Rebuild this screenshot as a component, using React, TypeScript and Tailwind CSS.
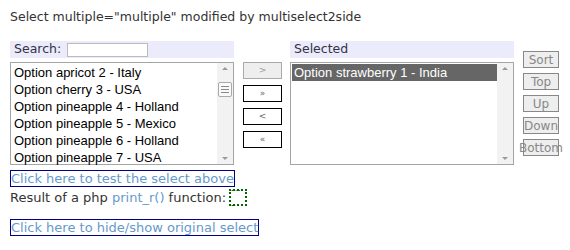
import React from "react";

const LEFT = [
  "Option apricot 2 - Italy",
  "Option cherry 3 - USA",
  "Option pineapple 4 - Holland",
  "Option pineapple 5 - Mexico",
  "Option pineapple 6 - Holland",
  "Option pineapple 7 - USA",
];

const MOVE = [">", "»", "<", "«"];
const ORDER = ["Sort", "Top", "Up", "Down", "Bottom"];

function Scrollbar({ thumb }: { thumb: boolean }) {
  return (
    <div className="flex w-[16px] flex-col items-center justify-between bg-[#f2f2f2] py-[4px]">
      <span className="h-0 w-0 border-x-[3px] border-b-[3px] border-x-transparent border-b-[#999]" />
      {thumb && (
        <div className="absolute top-[19px] flex h-[15px] w-[14px] flex-col items-center justify-center gap-[2px] rounded-[2px] border border-[#aaa] bg-[#fafafa]">
          <span className="h-px w-[8px] bg-[#888]" />
          <span className="h-px w-[8px] bg-[#888]" />
          <span className="h-px w-[8px] bg-[#888]" />
        </div>
      )}
      <span className="h-0 w-0 border-x-[3px] border-t-[3px] border-x-transparent border-t-[#999]" />
    </div>
  );
}

export default function App() {
  return (
    <div className="px-[10px] pt-[9px] font-['DejaVu_Sans',sans-serif] text-[12px] text-[#333]">
      <p className="text-[12.5px] leading-[15px]">Select multiple="multiple" modified by multiselect2side</p>

      <div className="mt-[17px] flex items-start">
        <div className="w-[224px]">
          <div className="flex h-[17px] items-center gap-[6px] bg-[#ebebfb] pl-[4px] text-[12.5px] text-[#334]">
            <span>Search:</span>
            <input className="h-[14px] w-[81px] border border-[#bbb] bg-white" />
          </div>
          <div className="relative mt-[4px] flex h-[103px] border border-[#a5a5a5] bg-white font-['Liberation_Sans',Arial,sans-serif] text-[13px] text-black">
            <div className="flex-1 pt-[1px] pl-[3px]">
              {LEFT.map((o) => (
                <div key={o} className="h-[17px] whitespace-nowrap leading-[17px]">{o}</div>
              ))}
            </div>
            <Scrollbar thumb />
          </div>
        </div>

        <div className="ml-[9px] flex w-[39px] flex-col gap-[6px] pt-[21px]">
          {MOVE.map((m, i) => (
            <div
              key={m}
              className={
                i === 0
                  ? "flex h-[17px] items-center justify-center border border-[#aaa] bg-[#eee] text-[9px] text-[#999]"
                  : "flex h-[17px] items-center justify-center border border-black bg-white text-[9px] text-[#666]"
              }
            >
              {m}
            </div>
          ))}
        </div>

        <div className="ml-[8px] w-[224px]">
          <div className="flex h-[17px] items-center bg-[#ebebfb] pl-[4px] text-[12.5px] text-[#334]">Selected</div>
          <div className="relative mt-[4px] flex h-[103px] border border-[#a5a5a5] bg-white font-['Liberation_Sans',Arial,sans-serif] text-[13px]">
            <div className="flex-1 pt-[1px] pl-[1px]">
              <div className="h-[17px] bg-[#666] pl-[2px] leading-[17px] text-white">Option strawberry 1 - India</div>
            </div>
            <Scrollbar thumb={false} />
          </div>
        </div>

        <div className="ml-[9px] flex w-[36px] flex-col gap-[5px] pt-[10px]">
          {ORDER.map((b) => (
            <div key={b} className="flex h-[17px] items-center justify-center border border-[#888] bg-[#eee] text-[12px] text-[#888]">
              {b}
            </div>
          ))}
        </div>
      </div>

      <div className="mt-[4px] text-[13px]">
        <a className="inline-block border border-[#000088] leading-[15px] text-[#6699cc]">Click here to test the select above</a>
        <div className="flex items-center leading-[15px]">
          <span>
            Result of a php <span className="text-[#6699cc]">print_r()</span> function:
          </span>
          <span className="ml-[3px] flex h-[17px] w-[18px] items-center justify-center border-2 border-dotted border-[#006600] text-[#006600]">
            ---
          </span>
        </div>
        <a className="mt-[13px] inline-block border border-[#000088] leading-[15px] text-[#6699cc]">Click here to hide/show original select</a>
      </div>
    </div>
  );
}
